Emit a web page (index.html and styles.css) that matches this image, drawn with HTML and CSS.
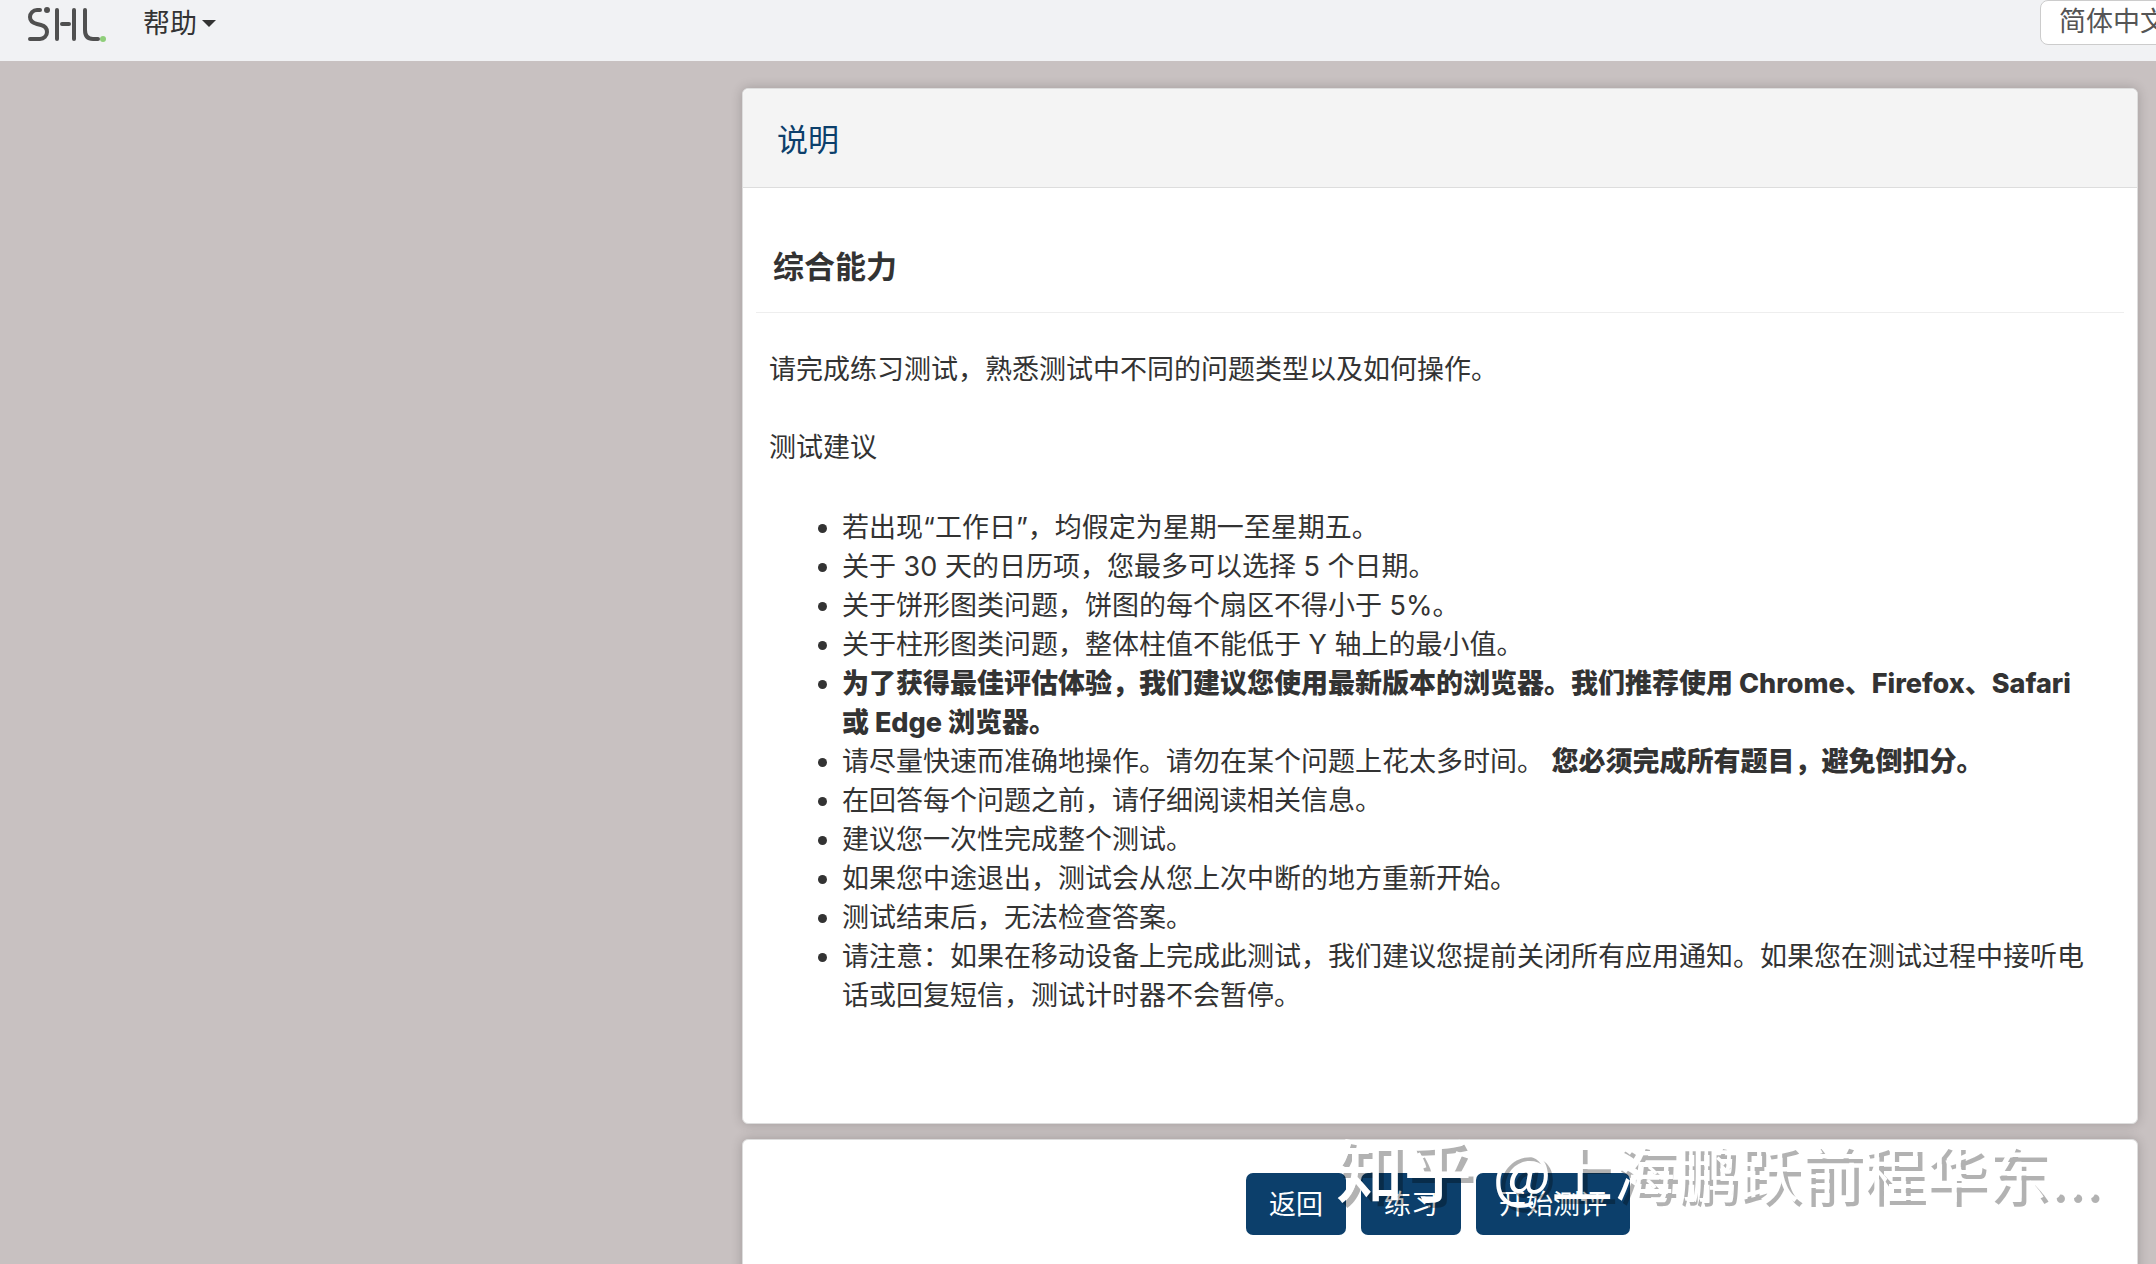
FILE: index.html
```html
<!doctype html>
<html lang="zh-CN">
<head>
  <meta charset="utf-8">
  <meta name="viewport" content="width=device-width, initial-scale=1.0">
  <title>说明</title>
  <link rel="stylesheet" href="styles.css">
</head>
<body>

  <header class="navbar">
    <a class="brand" href="#" aria-label="SHL">
      <svg width="80" height="36" viewBox="0 0 80 36" fill="none" stroke="#505050" stroke-width="4" stroke-linecap="round" stroke-linejoin="round">
        <path d="M13 3H10a7 7 0 0 0-7 7c0 4 3 6 7 7l4 1c4 1 6 4 6 7a7 7 0 0 1-7 7H3"/>
        <path d="M30 3v29M47 3v29M35 17h7"/>
        <path d="M58 3v20c0 6 3 9 8 9h5"/>
        <circle cx="20" cy="3" r="3" fill="#505050" stroke="none"/>
        <circle cx="76" cy="32" r="3" fill="#8fce7a" stroke="none"/>
      </svg>
    </a>
    <button class="help" type="button">帮助<span class="caret"></span></button>
    <select class="language" aria-label="语言">
      <option>简体中文</option>
    </select>
  </header>

  <div class="page">
    <main class="content">
      <section class="panel">
        <div class="panel-heading">
          <h1>说明</h1>
        </div>
        <div class="panel-body">
          <h2>综合能力</h2>
          <div class="instructions">
            <p>请完成练习测试，熟悉测试中不同的问题类型以及如何操作。</p>
            <p>测试建议</p>
            <ul>
              <li>若出现“工作日”，均假定为星期一至星期五。</li>
              <li>关于 30 天的日历项，您最多可以选择 5 个日期。</li>
              <li>关于饼形图类问题，饼图的每个扇区不得小于 5%。</li>
              <li>关于柱形图类问题，整体柱值不能低于 Y 轴上的最小值。</li>
              <li><strong>为了获得最佳评估体验，我们建议您使用最新版本的浏览器。我们推荐使用 Chrome、Firefox、Safari 或 Edge 浏览器。</strong></li>
              <li>请尽量快速而准确地操作。请勿在某个问题上花太多时间。 <strong>您必须完成所有题目，避免倒扣分。</strong></li>
              <li>在回答每个问题之前，请仔细阅读相关信息。</li>
              <li>建议您一次性完成整个测试。</li>
              <li>如果您中途退出，测试会从您上次中断的地方重新开始。</li>
              <li>测试结束后，无法检查答案。</li>
              <li>请注意：如果在移动设备上完成此测试，我们建议您提前关闭所有应用通知。如果您在测试过程中接听电话或回复短信，测试计时器不会暂停。</li>
            </ul>
          </div>
        </div>
      </section>

      <section class="panel actions">
        <button class="btn" type="button">返回</button>
        <button class="btn" type="button">练习</button>
        <button class="btn" type="button">开始测评</button>
        <div class="watermark"><span class="site">知乎</span> @上海鹏跃前程华东...</div>
      </section>
    </main>
  </div>

</body>
</html>
```

FILE: styles.css
```css
* {
    box-sizing: border-box;
}
html, body {
    height: 100%;
}
body {
    margin: 0;
    overflow: hidden;
    background: #c8c1c1;
    color: #333;
    font-family: Inter, "Noto Sans CJK SC", sans-serif;
    font-size: 27px;
    line-height: 39px;
}
button, select {
    font: inherit;
}

/* top bar */
.navbar {
    display: flex;
    align-items: flex-start;
    height: 61px;
    padding-left: 27px;
    background: #f1f2f4;
    overflow: hidden;
}
.brand {
    display: block;
    padding-top: 7px;
    line-height: 0;
}
.help {
    display: flex;
    align-items: center;
    margin-left: 36px;
    padding: 4px 0 0;
    border: 0;
    background: none;
    color: #333;
}
.caret {
    margin-left: 5px;
    border-top: 7px solid #333;
    border-left: 7px solid transparent;
    border-right: 7px solid transparent;
}
.language {
    width: 200px;
    height: 45px;
    margin-left: auto;
    margin-right: -84px;
    padding: 0 18px 3px;
    border: 1px solid #ccc;
    border-radius: 8px;
    background: #fff;
    color: #555;
    -webkit-appearance: none;
    appearance: none;
}

/* panels */
.page {
    display: grid;
    grid-template-columns: 742px 1fr;
    padding: 27px 18px 0 0;
}
.content {
    grid-column: 2;
}
.panel {
    margin-bottom: 15px;
    border: 1px solid #ddd;
    border-radius: 6px;
    background: #fff;
    box-shadow: 0 0 12px rgba(0, 0, 0, .2);
}
.panel-heading {
    padding: 31px 34px 28px;
    border-bottom: 1px solid #ddd;
    border-radius: 6px 6px 0 0;
    background: #f4f4f4;
}
.panel-heading h1 {
    margin: 0;
    color: #0c3f6b;
    font-size: 31px;
    font-weight: normal;
    line-height: 39px;
}
.panel-body {
    padding: 39px 13px 108px;
}
.panel-body h2 {
    margin: 0;
    padding: 20px 17px 26px;
    border-bottom: 1px solid #eee;
    font-size: 31px;
    line-height: 39px;
}
.instructions {
    padding: 37px 32px 0 13px;
}
.instructions p {
    margin: 0 0 39px;
}
.instructions ul {
    margin: 41px 0 0;
    padding-left: 73px;
}
.instructions strong {
    font-weight: 800;
}

/* buttons under the instructions */
.actions {
    position: relative;
    display: flex;
    justify-content: center;
    gap: 15px;
    padding: 33px 4px 60px 0;
}
.btn {
    height: 62px;
    padding: 0 23px;
    border: 0;
    border-radius: 7px;
    background: #0c3f6b;
    color: #fff;
}
.watermark {
    position: absolute;
    top: -9px;
    right: 38px;
    color: #fff;
    font-family: "Noto Sans CJK SC", sans-serif;
    font-size: 62px;
    line-height: 74px;
    text-shadow: 5px 5px 0 rgba(0, 0, 0, .3);
    white-space: nowrap;
    pointer-events: none;
}
.watermark .site {
    margin-right: 7px;
    font-size: 68px;
    font-weight: 500;
}
```
